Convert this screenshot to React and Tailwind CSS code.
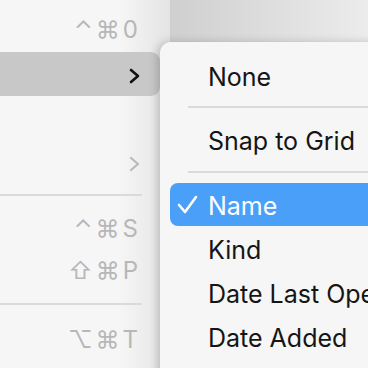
import React from 'react';

const font = { fontFamily: 'Inter, "DejaVu Sans", sans-serif' };

const Chevron = ({ dark }) => (
  <svg width="12" height="16" viewBox="0 0 12 16" className="block">
    <polyline
      points="2,2 9,8 2,14"
      fill="none"
      stroke={dark ? '#111111' : '#b9b9b9'}
      strokeWidth={dark ? 2.6 : 2.2}
      strokeLinecap="round"
      strokeLinejoin="round"
    />
  </svg>
);

const Shortcut = ({ keys }) => (
  <span className="text-[24px] leading-none text-[#b7b7b7] tracking-[3px] whitespace-nowrap">{keys}</span>
);

const LeftRow = ({ h, children, active }) => (
  <div
    className={
      active
        ? 'flex items-center justify-end bg-[#c8c8c8] rounded-r-[9px] w-[160px] pr-[19px] pt-[3px]'
        : 'flex items-center justify-end w-[168px] pr-[27px] pt-[3px]'
    }
    style={{ height: h }}
  >
    {children}
  </div>
);

const SubItem = ({ label, h = 44 }) => (
  <div className="flex items-center pl-[48px] pt-[5px] text-[25px] text-[#151515] whitespace-nowrap" style={{ height: h }}>
    {label}
  </div>
);

const SubSep = ({ h }) => (
  <div className="flex items-center pl-[28px]" style={{ height: h }}>
    <div className="h-[2px] w-full bg-[#dadada]" />
  </div>
);

export default function App() {
  return (
    <div className="relative w-[368px] h-[368px] overflow-hidden flex bg-[#f5f5f5]" style={font}>
      {/* main menu */}
      <div className="w-[170px] h-full pt-[6px] bg-gradient-to-r from-[#f6f6f6] from-70% to-[#e4e4e4]">
        <LeftRow h={44}>
          <Shortcut keys="⌃⌘0" />
        </LeftRow>
        <div className="h-[2px]" />
        <LeftRow h={44} active>
          <Chevron dark />
        </LeftRow>
        <LeftRow h={44} />
        <LeftRow h={44}>
          <Chevron />
        </LeftRow>
        <div className="h-[22px] flex items-center w-[142px]">
          <div className="h-[2px] w-full bg-[#dadada]" />
        </div>
        <LeftRow h={42}>
          <Shortcut keys="⌃⌘S" />
        </LeftRow>
        <LeftRow h={42}>
          <Shortcut keys="⇧⌘P" />
        </LeftRow>
        <div className="h-[28px] flex items-center w-[142px]">
          <div className="h-[2px] w-full bg-[#dadada]" />
        </div>
        <LeftRow h={40}>
          <Shortcut keys="⌥⌘T" />
        </LeftRow>
      </div>

      {/* window behind */}
      <div className="flex-1 h-[42px] bg-gradient-to-r from-[#cfcfcf] to-[#ececec]" />

      {/* submenu */}
      <div className="absolute left-[160px] top-[42px] w-[230px] h-[340px] bg-[#f6f6f6] rounded-tl-[11px] pt-[11px] shadow-[-3px_0_8px_rgba(0,0,0,0.18)]">
        <SubItem label="None" />
        <SubSep h={20} />
        <SubItem label="Snap to Grid" />
        <SubSep h={22} />
        <div className="mx-[10px] h-[43px] rounded-[8px] bg-[#4a9ff8] flex items-center text-white text-[25px] relative">
          <svg width="22" height="20" viewBox="0 0 22 20" className="absolute left-[7px] top-[12px]">
            <polyline
              points="2,10 8,17 19,2"
              fill="none"
              stroke="#ffffff"
              strokeWidth="2.6"
              strokeLinecap="round"
              strokeLinejoin="round"
            />
          </svg>
          <span className="pl-[38px] pt-[4px]">Name</span>
        </div>
        <SubItem label="Kind" />
        <SubItem label="Date Last Opened" />
        <SubItem label="Date Added" />
      </div>
    </div>
  );
}
